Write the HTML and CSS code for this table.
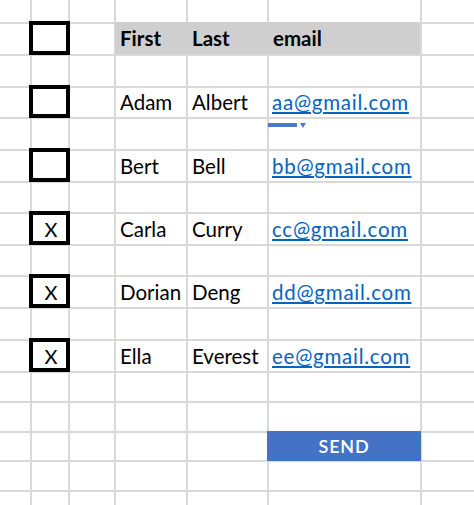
FILE: index.html
```html
<!DOCTYPE html>
<html>
<head>
<meta charset="utf-8">
<link rel="stylesheet" href="styles.css">
</head>
<body>
<div class="sheet">
  <!-- row 1 -->
  <div class="cell"></div><div class="cell"></div><div class="cell"></div><div class="cell"></div><div class="cell"></div><div class="cell"></div><div class="cell"></div>
  <!-- row 2 -->
  <div class="cell"></div><div class="box"></div><div class="cell"></div>
  <div class="header"><div class="hcell">First</div><div class="hcell">Last</div><div class="hcell">email</div></div>
  <div class="cell"></div>
  <!-- row 3 -->
  <div class="cell"></div><div class="cell"></div><div class="cell"></div><div class="cell"></div><div class="cell"></div><div class="cell"></div><div class="cell"></div>
  <!-- row 4 -->
  <div class="cell"></div><div class="box"></div><div class="cell"></div>
  <div class="cell">Adam</div><div class="cell">Albert</div><div class="cell"><a class="link">aa@gmail.com</a></div><div class="cell"></div>
  <!-- row 5 -->
  <div class="cell"></div><div class="cell"></div><div class="cell"></div><div class="cell"></div><div class="cell"></div>
  <div class="cell tagcell"><span class="tagbar"></span><span class="tagarrow"></span></div>
  <div class="cell"></div>
  <!-- row 6 -->
  <div class="cell"></div><div class="box"></div><div class="cell"></div>
  <div class="cell">Bert</div><div class="cell">Bell</div><div class="cell"><a class="link">bb@gmail.com</a></div><div class="cell"></div>
  <!-- row 7 -->
  <div class="cell"></div><div class="cell"></div><div class="cell"></div><div class="cell"></div><div class="cell"></div><div class="cell"></div><div class="cell"></div>
  <!-- row 8 -->
  <div class="cell"></div><div class="box">X</div><div class="cell"></div>
  <div class="cell">Carla</div><div class="cell">Curry</div><div class="cell"><a class="link">cc@gmail.com</a></div><div class="cell"></div>
  <!-- row 9 -->
  <div class="cell"></div><div class="cell"></div><div class="cell"></div><div class="cell"></div><div class="cell"></div><div class="cell"></div><div class="cell"></div>
  <!-- row 10 -->
  <div class="cell"></div><div class="box">X</div><div class="cell"></div>
  <div class="cell">Dorian</div><div class="cell">Deng</div><div class="cell"><a class="link">dd@gmail.com</a></div><div class="cell"></div>
  <!-- row 11 -->
  <div class="cell"></div><div class="cell"></div><div class="cell"></div><div class="cell"></div><div class="cell"></div><div class="cell"></div><div class="cell"></div>
  <!-- row 12 -->
  <div class="cell"></div><div class="box">X</div><div class="cell"></div>
  <div class="cell">Ella</div><div class="cell">Everest</div><div class="cell"><a class="link">ee@gmail.com</a></div><div class="cell"></div>
  <!-- row 13 -->
  <div class="cell"></div><div class="cell"></div><div class="cell"></div><div class="cell"></div><div class="cell"></div><div class="cell"></div><div class="cell"></div>
  <!-- row 14 -->
  <div class="cell"></div><div class="cell"></div><div class="cell"></div><div class="cell"></div><div class="cell"></div><div class="cell"></div><div class="cell"></div>
  <!-- row 15 -->
  <div class="cell"></div><div class="cell"></div><div class="cell"></div><div class="cell"></div><div class="cell"></div>
  <div class="send">SEND</div>
  <div class="cell"></div>
  <!-- row 16 -->
  <div class="cell"></div><div class="cell"></div><div class="cell"></div><div class="cell"></div><div class="cell"></div><div class="cell"></div><div class="cell"></div>
  <!-- row 17 -->
  <div class="cell"></div><div class="cell"></div><div class="cell"></div><div class="cell"></div><div class="cell"></div><div class="cell"></div><div class="cell"></div>
</div>
</body>
</html>
```

FILE: styles.css
```css
html, body {
  margin: 0;
  padding: 0;
  background: #ffffff;
}

.sheet {
  width: 474px;
  height: 505px;
  overflow: hidden;
  display: grid;
  grid-template-columns: 30px 36px 44px 70px 79px 151px 52px;
  grid-template-rows: 22px 30px 30px 29px 30px 30px 29px 30px 29px 30px 30px 30px 28px 28px 27px 28px 13px;
  gap: 2px;
  background: #d9d9d9;
  font-family: Lato, "Open Sans", sans-serif;
  font-size: 20.5px;
  line-height: 21px;
  color: #000;
}

.cell {
  background: #fff;
  display: flex;
  align-items: flex-end;
  padding: 0 0 4px 4px;
  white-space: nowrap;
  min-width: 0;
}

.box {
  background: #fff;
  border: 4px solid #000;
  margin: -3px -2px -1px -3px;
  display: flex;
  align-items: flex-end;
  justify-content: center;
  padding: 0 0 1px 3px;
  font-size: 20px;
}

.header {
  grid-column: span 3;
  background: #cfcfcf;
  margin: -2px 0 0 -1px;
  padding-left: 1px;
  display: grid;
  grid-template-columns: 70px 79px 151px;
  column-gap: 2px;
  font-weight: bold;
}

.hcell {
  display: flex;
  align-items: flex-end;
  padding: 0 0 5px 4px;
}

.link {
  color: #0563c1;
  text-decoration: underline;
  text-decoration-thickness: 1.5px;
  text-underline-offset: 2px;
  letter-spacing: 0.75px;
  margin-left: -1px;
}

.tagcell {
  align-items: flex-start;
  padding: 4px 0 0 0;
  gap: 3px;
}

.tagbar {
  display: block;
  width: 29px;
  height: 4px;
  margin-left: -1px;
  background: #4a7bd0;
}

.tagarrow {
  display: block;
  width: 0;
  height: 0;
  border-left: 3px solid transparent;
  border-right: 3px solid transparent;
  border-top: 5px solid #4a7bd0;
}

.send {
  background: #4472c4;
  margin: -2px -1px -1px -2px;
  color: #fff;
  font-size: 18px;
  font-weight: 600;
  letter-spacing: 0.8px;
  display: flex;
  align-items: center;
  justify-content: center;
}
```
